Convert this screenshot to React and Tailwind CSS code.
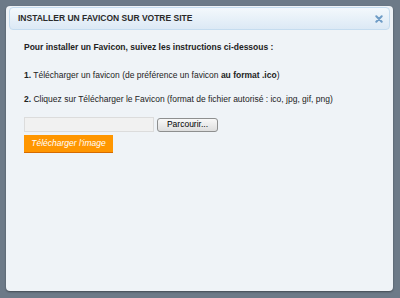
export default function App() {
  return (
    <div className="w-[400px] h-[298px] bg-[#6d7a88] pt-[6px] pl-[6px] pr-[7px] pb-[7px]" style={{ fontFamily: '"Liberation Sans", Arial, sans-serif' }}>
      <div className="h-full bg-[#eff3f7] rounded-[4px] shadow-[0_1px_2px_rgba(0,0,0,0.4)] pt-[1px] px-[3px] flex flex-col">
        <div className="h-[23px] rounded-[4px] border border-[#c5dcef] bg-gradient-to-b from-[#f3f8fc] to-[#dce9f5] flex items-center justify-between pl-[8px] pr-[6px]">
          <span className="text-[8.5px] font-bold text-[#2a2a2a]">INSTALLER UN FAVICON SUR VOTRE SITE</span>
          <svg width="8" height="8" viewBox="0 0 8 8"><path d="M1.3 1.3 L6.7 6.7 M6.7 1.3 L1.3 6.7" stroke="#6f9cc6" strokeWidth="2" strokeLinecap="round" /></svg>
        </div>
        <div className="pl-[15px] pt-[11px] text-[8.5px] text-[#222]">
          <p className="font-bold leading-[12px]">Pour installer un Favicon, suivez les instructions ci-dessous :</p>
          <p className="mt-[16px] leading-[12px]"><b>1.</b> Télécharger un favicon (de préférence un favicon <b>au format .ico</b>)</p>
          <p className="mt-[12px] leading-[12px]"><b>2.</b> Cliquez sur Télécharger le Favicon (format de fichier autorisé : ico, jpg, gif, png)</p>
          <div className="mt-[12px] flex items-center gap-[3px]">
            <div className="w-[130px] h-[15px] bg-[#f1f1f1] border border-[#dcdcdc]" />
            <div className="w-[61px] h-[14px] flex items-center justify-center border border-[#8e8f8f] rounded-[3px] bg-gradient-to-b from-[#f8f8f8] to-[#dedede] text-[8.5px] text-black">Parcourir...</div>
          </div>
          <div className="mt-[3px] w-[89px] h-[18px] bg-[#ff9600] border-b border-[#d56a00] flex items-center justify-center text-white italic text-[8.5px]">Télécharger l'image</div>
        </div>
      </div>
    </div>
  );
}
